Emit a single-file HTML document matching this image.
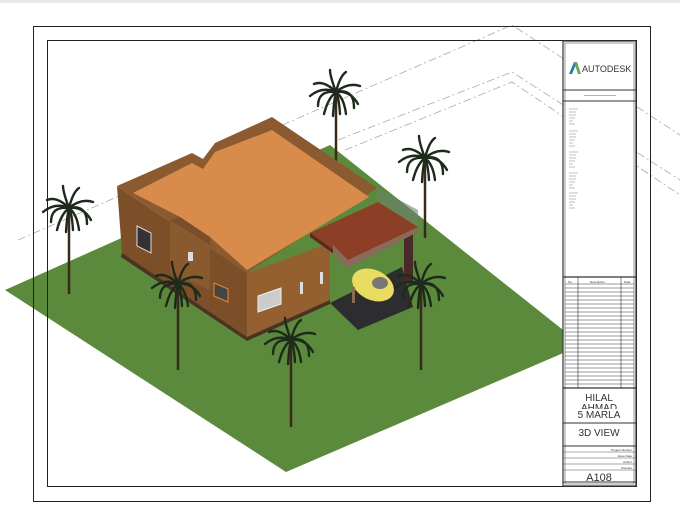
<!DOCTYPE html>
<html><head><meta charset="utf-8"><style>
html,body{margin:0;padding:0;background:#fff;}
svg{display:block}
text{font-family:"Liberation Sans",sans-serif}
</style></head><body>
<svg width="680" height="521" viewBox="0 0 680 521" xmlns="http://www.w3.org/2000/svg">
<defs>
<g id="fr">
<path d="M0 0 Q-14 -6 -26 4 M0 0 Q-12 -12 -22 -8 M0 0 Q-6 -16 -6 -22 M0 0 Q4 -16 10 -20 M0 0 Q12 -10 24 -6 M0 0 Q14 -2 22 12 M0 0 Q-8 6 -12 22 M0 0 Q8 6 10 22 M0 0 Q-2 8 -3 24 M0 0 Q-18 -2 -18 14 M0 0 Q18 -4 18 16 M0 0 Q3 6 4 22" stroke="#1e2a1c" stroke-width="2.4" fill="none" stroke-linecap="round"/>
</g>
</defs>
<rect width="680" height="521" fill="#fff"/>
<rect x="0" y="0" width="680" height="3" fill="#e8e8e8"/>
<g stroke="#aaa" stroke-width="0.8" fill="none" stroke-dasharray="8,3,2,3">
<path d="M18 240 L512 25 L680 135"/>
<path d="M338 140 L512 72 L680 180"/>
<path d="M345 150 L512 82 L680 195"/>
</g>
<polygon points="5,290 330,145 582,345 286,472" fill="#5b8a3c"/>
<line x1="336" y1="90" x2="336" y2="168" stroke="#3a2a1a" stroke-width="2.5"/>
<use href="#fr" x="336" y="92"/>
<line x1="425" y1="158" x2="425" y2="238" stroke="#3a2a1a" stroke-width="2.5"/>
<use href="#fr" x="425" y="158"/>
<polygon points="117,186 247,273 247,337 122,253" fill="#7d4f28"/>
<polygon points="247,273 330,243 330,300 247,337" fill="#94602f"/>
<polygon points="122,253 247,337 247,341 121,257" fill="#4a3322"/>
<polygon points="247,337 330,300 330,304 247,341" fill="#4a3322"/>
<polygon points="170,220 210,237 210,290 170,273" fill="#8a5a2e"/>
<polygon points="137,226 151,233 151,253 137,246" fill="#333" stroke="#ddd" stroke-width="1"/>
<polygon points="214,283 228,289 228,302 214,296" fill="#444" stroke="#e48a30" stroke-width="1"/>
<polygon points="258,296 281,288 281,304 258,312" fill="#ccc" stroke="#eee"/>
<rect x="300" y="282" width="3" height="12" fill="#ddd"/>
<rect x="320" y="272" width="3" height="12" fill="#ddd"/>
<rect x="188" y="252" width="5" height="9" fill="#ddd"/>
<polygon points="117,186 192,153 203,159 215,143 272,117 377,188 247,273" fill="#8c5a30"/>
<polygon points="133,193 192,163 203,169 215,152 272,130 369,197 247,270 210,237 180,217" fill="#d98b4b"/>
<polygon points="170,220 180,217 210,237 210,245" fill="#7a4e28"/>
<polygon points="330,303 402,267 413,307 358,330" fill="#2d2d30"/>
<polygon points="377,188 418,210 418,227 377,205" fill="#6f7f6a" opacity="0.6"/>
<rect x="404" y="232" width="9" height="52" fill="#4a2a28"/>
<polygon points="310,233 378,202 418,227 348,260" fill="#8c3f26"/>
<polygon points="310,233 348,260 348,264 310,237" fill="#5a2a1a"/>
<polygon points="333,245 348,260 418,227 418,232 348,268 333,255" fill="#8a6b5a"/>
<ellipse cx="373" cy="285" rx="22" ry="15" fill="#e8dd60" transform="rotate(25 373 285)"/>
<ellipse cx="380" cy="283" rx="8" ry="6" fill="#777"/>
<rect x="352" y="287" width="3" height="16" fill="#8a6a50"/>
<line x1="69" y1="205" x2="69" y2="294" stroke="#3a2a1a" stroke-width="2.5"/>
<use href="#fr" x="69" y="208"/>
<line x1="178" y1="280" x2="178" y2="370" stroke="#3a2a1a" stroke-width="2.5"/>
<use href="#fr" x="178" y="284"/>
<line x1="291" y1="338" x2="291" y2="427" stroke="#3a2a1a" stroke-width="2.5"/>
<use href="#fr" x="291" y="340"/>
<line x1="421" y1="280" x2="421" y2="370" stroke="#3a2a1a" stroke-width="2.5"/>
<use href="#fr" x="421" y="284"/>
<rect x="33.5" y="26.5" width="617" height="475" fill="none" stroke="#222" stroke-width="1"/>
<rect x="47.5" y="40.5" width="589" height="446" fill="none" stroke="#222" stroke-width="1"/>
<rect x="563" y="41" width="73" height="445" fill="#fff" stroke="#333" stroke-width="1.2"/>
<rect x="565" y="43" width="69" height="441" fill="none" stroke="#555" stroke-width="0.6"/>
<line x1="563" y1="90" x2="636" y2="90" stroke="#333"/>
<line x1="563" y1="101" x2="636" y2="101" stroke="#333"/>
<line x1="584" y1="95.5" x2="616" y2="95.5" stroke="#999" stroke-width="0.7"/>
<polygon points="569,74 574,62 577,62 572,74" fill="#1e7fa8"/>
<polygon points="574,62 577,62 581,74 578,74" fill="#6aa84f"/>
<text x="582" y="72" font-size="9" fill="#333">AUTODESK</text>
<g stroke="#aaa" stroke-width="0.8">
<path d="M569 109h9M569 112h7M569 115h7M569 118h6M569 121h4M569 124h6"/>
<path d="M569 131h9M569 134h7M569 137h7M569 140h6M569 143h4M569 146h6"/>
<path d="M569 152h9M569 155h7M569 158h7M569 161h6M569 164h4M569 167h6"/>
<path d="M569 173h9M569 176h7M569 179h7M569 182h6M569 185h4M569 188h6"/>
<path d="M569 193h9M569 196h7M569 199h7M569 202h6M569 205h4M569 208h6"/>
</g>
<line x1="563" y1="277" x2="636" y2="277" stroke="#333" stroke-width="1.2"/>
<g stroke="#333" stroke-width="0.6">
<line x1="578" y1="277" x2="578" y2="388"/><line x1="621" y1="277" x2="621" y2="388"/>
<path d="M565 284H634M565 288H634M565 292H634M565 296H634M565 300H634M565 304H634M565 308H634M565 312H634M565 316H634M565 320H634M565 324H634M565 328H634M565 332H634M565 336H634M565 340H634M565 344H634M565 348H634M565 352H634M565 356H634M565 360H634M565 364H634M565 368H634M565 372H634M565 376H634M565 380H634M565 384H634"/>
</g>
<text x="568" y="283" font-size="3" fill="#333">No.</text><text x="590" y="283" font-size="3" fill="#333">Description</text><text x="624" y="283" font-size="3" fill="#333">Date</text>
<line x1="563" y1="388" x2="636" y2="388" stroke="#333" stroke-width="1.2"/>
<text x="599" y="401" font-size="10" fill="#333" text-anchor="middle">HILAL</text>
<text x="599" y="411" font-size="10" fill="#333" text-anchor="middle">AHMAD</text>
<rect x="566" y="409" width="66" height="2" fill="#fff"/>
<text x="599" y="418" font-size="10" fill="#333" text-anchor="middle">5 MARLA</text>
<line x1="563" y1="423" x2="636" y2="423" stroke="#333"/>
<text x="599" y="436" font-size="10" fill="#333" text-anchor="middle">3D VIEW</text>
<line x1="563" y1="446" x2="636" y2="446" stroke="#333"/>
<g stroke="#555" stroke-width="0.5"><line x1="563" y1="452" x2="636" y2="452"/><line x1="563" y1="458" x2="636" y2="458"/><line x1="563" y1="464" x2="636" y2="464"/><line x1="563" y1="470" x2="636" y2="470"/></g>
<text x="632" y="451" font-size="3" fill="#333" text-anchor="end">Project Number</text>
<text x="632" y="457" font-size="3" fill="#333" text-anchor="end">Issue Date</text>
<text x="632" y="463" font-size="3" fill="#333" text-anchor="end">Author</text>
<text x="632" y="469" font-size="3" fill="#333" text-anchor="end">Checker</text>
<text x="599" y="481" font-size="11" fill="#333" text-anchor="middle">A108</text>
<line x1="563" y1="482" x2="636" y2="482" stroke="#333"/>
</svg>
</body></html>
